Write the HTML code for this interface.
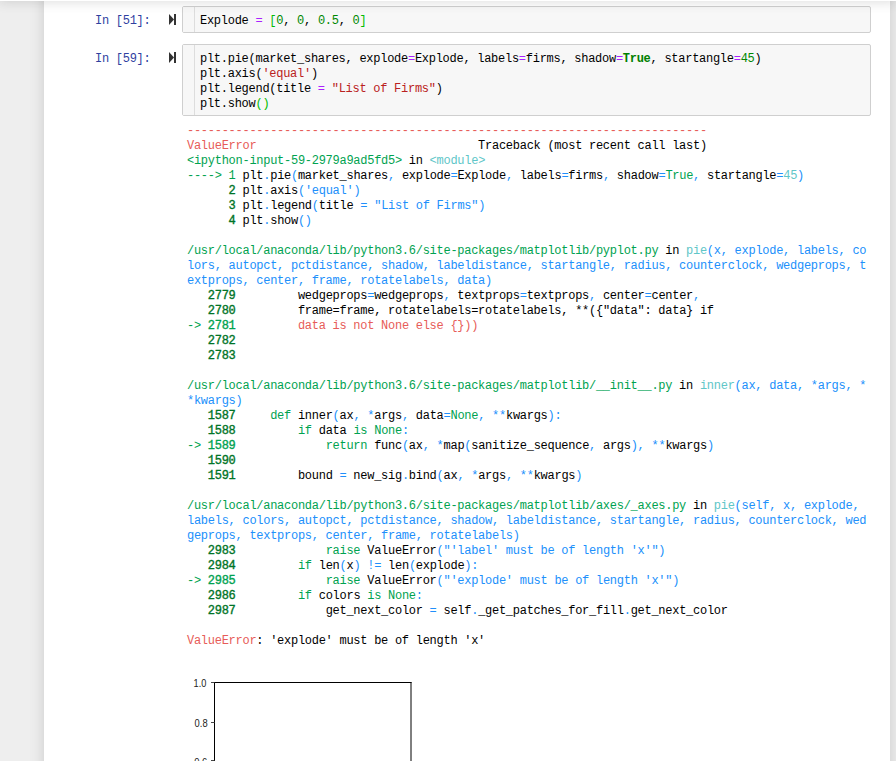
<!DOCTYPE html>
<html><head><meta charset="utf-8">
<style>
html,body{margin:0;padding:0;}
body{width:896px;height:761px;overflow:hidden;background:#eeeeee;position:relative;font-family:"Liberation Mono",monospace;}
#hdr{position:absolute;left:0;top:-20px;width:896px;height:21px;background:#fff;box-shadow:0 0 12px 1px rgba(87,87,87,0.2);z-index:10;}
#nb{position:absolute;left:44px;top:-20px;width:846px;height:900px;background:#fff;box-shadow:0 0 12px 1px rgba(87,87,87,0.2);z-index:1;}
.t{position:absolute;margin:0;white-space:pre;font-family:"Liberation Mono",monospace;font-size:12px;letter-spacing:-0.27px;line-height:15px;color:#000;z-index:5;}
.prompt{color:#303F9F;}
.box{position:absolute;left:182px;width:687px;background:#f7f7f7;border:1px solid #cfcfcf;border-radius:2px;z-index:4;}
.gut{position:absolute;left:0;top:0;bottom:0;width:11px;border-right:1px solid #ddd;background:#f7f7f7;}
.icon{position:absolute;z-index:5;}
.op{color:#AA22FF}.num{color:#008800}.str{color:#BA2121}.kw{color:#008000;font-weight:bold}.mb{color:#00bb00}
.r{color:#E75C58}.g{color:#00A250}.G{color:#007427;-webkit-text-stroke:0.35px #007427}.Gc{color:#00A250;-webkit-text-stroke:0.35px #00A250}.b{color:#208FFB}.c{color:#60C6C8}
</style></head><body>
<div id="hdr"></div>
<div id="nb"></div>

<!-- cell 51 -->
<div class="t prompt" style="left:95px;top:14px;">In [51]:</div>
<svg class="icon" style="left:168px;top:13px" width="10" height="13" viewBox="0 0 10 13"><path d="M1 1 L6 6.5 L1 12 Z" fill="#333"/><rect x="6" y="1" width="2" height="11" fill="#333"/></svg>
<div class="box" style="top:6px;height:25px;"><div class="gut"></div></div>
<div class="t" style="left:200px;top:14px;">Explode <span class="op">=</span> <span class="mb">[</span><span class="num">0</span>, <span class="num">0</span>, <span class="num">0.5</span>, <span class="num">0</span><span class="mb">]</span></div>

<!-- cell 59 -->
<div class="t prompt" style="left:95px;top:52px;">In [59]:</div>
<svg class="icon" style="left:168px;top:51px" width="10" height="13" viewBox="0 0 10 13"><path d="M1 1 L6 6.5 L1 12 Z" fill="#333"/><rect x="6" y="1" width="2" height="11" fill="#333"/></svg>
<div class="box" style="top:44px;height:70px;"><div class="gut"></div></div>
<div class="t" style="left:200px;top:52px;">plt.pie(market_shares, explode<span class="op">=</span>Explode, labels<span class="op">=</span>firms, shadow<span class="op">=</span><span class="kw">True</span>, startangle<span class="op">=</span><span class="num">45</span>)
plt.axis(<span class="str">'equal'</span>)
plt.legend(title <span class="op">=</span> <span class="str">"List of Firms"</span>)
plt.show<span class="mb">()</span></div>

<!-- traceback -->
<div class="t" style="left:187px;top:124px;"><span class="r">---------------------------------------------------------------------------</span>
<span class="r">ValueError</span>                                Traceback (most recent call last)
<span class="g">&lt;ipython-input-59-2979a9ad5fd5&gt;</span> in <span class="c">&lt;module&gt;</span>
<span class="g">----&gt; 1</span> plt<span class="b">.</span>pie<span class="b">(</span>market_shares<span class="b">,</span> explode<span class="b">=</span>Explode<span class="b">,</span> labels<span class="b">=</span>firms<span class="b">,</span> shadow<span class="b">=</span><span class="g">True</span><span class="b">,</span> startangle<span class="b">=</span><span class="c">45</span><span class="b">)</span>
      <span class="G">2</span> plt<span class="b">.</span>axis<span class="b">(</span><span class="b">'equal'</span><span class="b">)</span>
      <span class="G">3</span> plt<span class="b">.</span>legend<span class="b">(</span>title <span class="b">=</span> <span class="b">"List of Firms"</span><span class="b">)</span>
      <span class="G">4</span> plt<span class="b">.</span>show<span class="b">()</span>

<span class="g">/usr/local/anaconda/lib/python3.6/site-packages/matplotlib/pyplot.py</span> in <span class="c">pie</span><span class="b">(x, explode, labels, co</span>
<span class="b">lors, autopct, pctdistance, shadow, labeldistance, startangle, radius, counterclock, wedgeprops, t</span>
<span class="b">extprops, center, frame, rotatelabels, data)</span>
<span class="G">   2779</span>         wedgeprops<span class="b">=</span>wedgeprops<span class="b">,</span> textprops<span class="b">=</span>textprops<span class="b">,</span> center<span class="b">=</span>center<span class="b">,</span>
<span class="G">   2780</span>         frame=frame, rotatelabels=rotatelabels, **({"data": data} if
<span class="g">-&gt; </span><span class="Gc">2781</span>         <span class="r">data is not None else {}))</span>
<span class="G">   2782</span>
<span class="G">   2783</span>

<span class="g">/usr/local/anaconda/lib/python3.6/site-packages/matplotlib/__init__.py</span> in <span class="c">inner</span><span class="b">(ax, data, *args, *</span>
<span class="b">*kwargs)</span>
<span class="G">   1587</span>     <span class="g">def</span> inner<span class="b">(</span>ax<span class="b">,</span> <span class="b">*</span>args<span class="b">,</span> data<span class="b">=</span><span class="g">None</span><span class="b">,</span> <span class="b">**</span>kwargs<span class="b">):</span>
<span class="G">   1588</span>         <span class="g">if</span> data <span class="g">is</span> <span class="g">None</span><span class="b">:</span>
<span class="g">-&gt; </span><span class="Gc">1589</span>             <span class="g">return</span> func<span class="b">(</span>ax<span class="b">,</span> <span class="b">*</span>map<span class="b">(</span>sanitize_sequence<span class="b">,</span> args<span class="b">),</span> <span class="b">**</span>kwargs<span class="b">)</span>
<span class="G">   1590</span>
<span class="G">   1591</span>         bound <span class="b">=</span> new_sig<span class="b">.</span>bind<span class="b">(</span>ax<span class="b">,</span> <span class="b">*</span>args<span class="b">,</span> <span class="b">**</span>kwargs<span class="b">)</span>

<span class="g">/usr/local/anaconda/lib/python3.6/site-packages/matplotlib/axes/_axes.py</span> in <span class="c">pie</span><span class="b">(self, x, explode, </span>
<span class="b">labels, colors, autopct, pctdistance, shadow, labeldistance, startangle, radius, counterclock, wed</span>
<span class="b">geprops, textprops, center, frame, rotatelabels)</span>
<span class="G">   2983</span>             <span class="g">raise</span> ValueError<span class="b">(</span><span class="b">"'label' must be of length 'x'"</span><span class="b">)</span>
<span class="G">   2984</span>         <span class="g">if</span> len<span class="b">(</span>x<span class="b">)</span> <span class="b">!=</span> len<span class="b">(</span>explode<span class="b">):</span>
<span class="g">-&gt; </span><span class="Gc">2985</span>             <span class="g">raise</span> ValueError<span class="b">(</span><span class="b">"'explode' must be of length 'x'"</span><span class="b">)</span>
<span class="G">   2986</span>         <span class="g">if</span> colors <span class="g">is</span> <span class="g">None</span><span class="b">:</span>
<span class="G">   2987</span>             get_next_color <span class="b">=</span> self<span class="b">.</span>_get_patches_for_fill<span class="b">.</span>get_next_color

<span class="r">ValueError</span>: 'explode' must be of length 'x'</div>

<!-- plot -->
<svg style="position:absolute;left:180px;top:670px;z-index:5" width="260" height="91" viewBox="0 0 260 91">
<g stroke="#000" stroke-width="1" fill="none">
<path d="M34.5 12 V91"/>
<path d="M34 12.5 H231.5"/>
<path d="M231 12 V91"/>
<path stroke="#444" d="M31 12.5 H34.5 M31 52.5 H34.5 M31 90.5 H34.5"/>
</g>
<g font-family="Liberation Sans, sans-serif" font-size="11" fill="#222">
<text x="13.6" y="17" textLength="12.8" lengthAdjust="spacingAndGlyphs">1.0</text>
<text x="14.6" y="57" textLength="13" lengthAdjust="spacingAndGlyphs">0.8</text>
<text x="14.2" y="96" textLength="13" lengthAdjust="spacingAndGlyphs">0.6</text>
</g>
</svg>
</body></html>
